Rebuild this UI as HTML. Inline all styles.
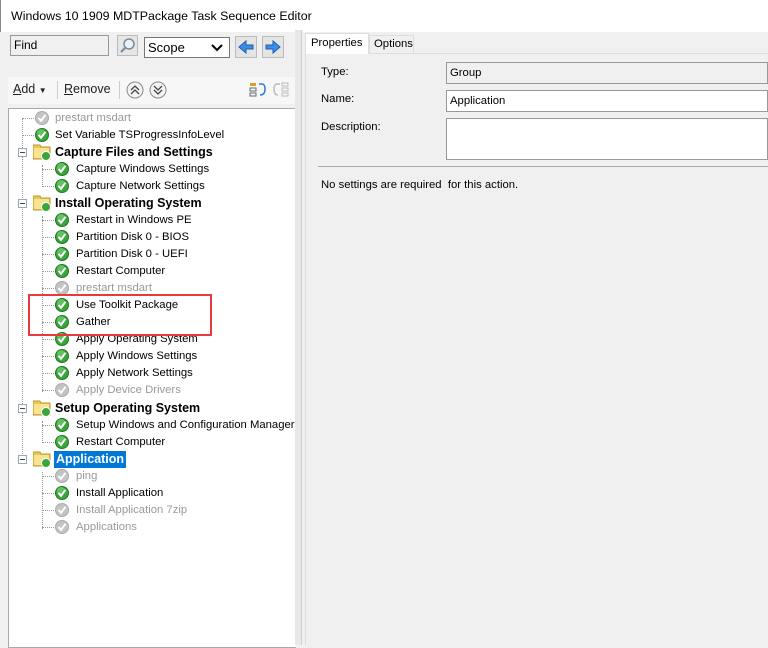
<!DOCTYPE html>
<html><head><meta charset="utf-8"><style>
*{margin:0;padding:0;box-sizing:border-box}
body{width:768px;height:645px;overflow:hidden;background:#f0f0f0;font-family:"Liberation Sans",Arial,sans-serif;font-size:11.3px;color:#000;position:relative}
.abs{position:absolute}
.title{left:0;top:0;width:768px;height:32px;background:#fff;font-size:12.4px;padding:9px 0 0 10px;border-left:1px solid #888}
.row{position:absolute;height:17px;line-height:17px;white-space:nowrap;font-size:11.3px}
.dis{color:#999}
.b{font-weight:bold;font-size:12.5px}
.vl{position:absolute;border-left:1px dotted #999;width:0}
.hl{position:absolute;border-top:1px dotted #999;height:0}
.exp{position:absolute;width:9px;height:9px;border:1px solid #9aa;background:#fff}
.exp:after{content:"";position:absolute;left:1px;top:3px;width:5px;height:1px;background:#446}
</style></head><body>
<div class="abs title">Windows 10 1909 MDTPackage Task Sequence Editor</div>

<div class="abs" style="left:10px;top:35px;width:99px;height:21px;border:1px solid #999;background:#f0f0f0;padding:2px 3px;font-size:12px">Find</div>
<div class="abs" style="left:117px;top:35px;width:21px;height:21px;border:1px solid #bbb;background:#e6e6e6"><svg width="19" height="19"><circle cx="11" cy="8" r="5" fill="#e8f0f8" stroke="#7a8a9a" stroke-width="1.5"/><line x1="7" y1="12" x2="3" y2="16" stroke="#7a8a9a" stroke-width="2"/></svg></div>
<div class="abs" style="left:144px;top:37px;width:86px;height:21px;border:1px solid #777;background:#fff;padding:2px 3px;font-size:13px">Scope<svg class="abs" style="left:66px;top:6px" width="12" height="8"><path d="M1 1L6 6L11 1" stroke="#000" stroke-width="2" fill="none"/></svg></div>
<div class="abs" style="left:235px;top:36px;width:22px;height:22px;border:1px solid #bbb;background:#e4e4e4"><svg width="20" height="20"><path d="M3 10L10 4V8H17V12H10V16Z" fill="#3a8ee6" stroke="#1d5fb0"/></svg></div>
<div class="abs" style="left:262px;top:36px;width:22px;height:22px;border:1px solid #bbb;background:#e4e4e4"><svg width="20" height="20"><path d="M17 10L10 4V8H3V12H10V16Z" fill="#3a8ee6" stroke="#1d5fb0"/></svg></div>

<div class="abs" style="left:8px;top:77px;width:288px;height:27px;background:#f7f7f7"></div>
<div class="abs" style="left:13px;top:82px;font-size:12.5px;color:#222"><u>A</u>dd <span style="font-size:8px">▼</span></div>
<div class="abs" style="left:57px;top:81px;width:1px;height:18px;background:#ccc"></div>
<div class="abs" style="left:64px;top:82px;font-size:12.5px;color:#222"><u>R</u>emove</div>
<div class="abs" style="left:119px;top:81px;width:1px;height:18px;background:#ccc"></div>
<svg class="abs" style="left:126px;top:80px" width="44" height="20"><circle cx="9" cy="10" r="8" fill="#f4f4f4" stroke="#888"/><path d="M5 10L9 6L13 10M5 14L9 10L13 14" stroke="#444" fill="none" stroke-width="1.3"/><circle cx="32" cy="10" r="8" fill="#f4f4f4" stroke="#888"/><path d="M28 6L32 10L36 6M28 10L32 14L36 10" stroke="#444" fill="none" stroke-width="1.3"/></svg>
<svg class="abs" style="left:249px;top:80px" width="44" height="20"><rect x="1" y="3" width="6" height="3" fill="#e0a020"/><rect x="1" y="8" width="6" height="3" fill="none" stroke="#667"/><rect x="1" y="13" width="6" height="3" fill="none" stroke="#667"/><path d="M10 4H13Q16 4 16 9Q16 15 11 15" stroke="#2a7de0" fill="none" stroke-width="1.5"/><path d="M31 4H28Q25 4 25 9Q25 15 29 15" stroke="#bbb" fill="none" stroke-width="1.5"/><rect x="33" y="3" width="6" height="3" fill="none" stroke="#bbb"/><rect x="33" y="8" width="6" height="3" fill="none" stroke="#bbb"/><rect x="33" y="13" width="6" height="3" fill="none" stroke="#bbb"/></svg>

<div class="abs" style="left:8px;top:108px;width:288px;height:540px;background:#fff;border:1px solid #aaa;border-right:none"></div>
<div class="abs" style="left:295px;top:30px;width:6px;height:615px;background:#e8e8e8"></div>
<div class="abs" style="left:301px;top:30px;width:1px;height:615px;background:#d0d0d0"></div>

<svg width="0" height="0" style="position:absolute"><defs>
<g id="ok"><circle cx="7" cy="7" r="6.5" fill="#3aa53a" stroke="#1d7a1d"/><circle cx="6" cy="5" r="4" fill="#7fd07f" opacity=".6"/><path d="M3.5 7L6 9.8L10.5 3.8" stroke="#fff" stroke-width="2" fill="none"/></g>
<g id="dis"><circle cx="7" cy="7" r="6.5" fill="#c4c4c4" stroke="#aaa"/><path d="M3.5 7L6 9.8L10.5 3.8" stroke="#fff" stroke-width="2" fill="none"/></g>
<g id="fold"><path d="M0 2H7L8 4H17V16H0Z" fill="#e8c850" stroke="#b89830"/><rect x="1" y="5" width="15" height="10" fill="#f8e490"/><circle cx="13" cy="13" r="4.5" fill="#3aa53a" stroke="#fff"/></g>
</defs></svg>

<div class="vl" style="left:22px;top:118px;height:342px"></div>
<div class="vl" style="left:42px;top:165px;height:22px"></div>
<div class="vl" style="left:42px;top:216px;height:176px"></div>
<div class="vl" style="left:42px;top:421px;height:22px"></div>
<div class="vl" style="left:42px;top:472px;height:57px"></div>

<div class="hl" style="left:22px;top:118px;width:14px"></div><svg class="abs" style="left:35px;top:111px" width="14" height="14"><use href="#dis"/></svg><div class="row dis" style="left:55px;top:110px">prestart msdart</div>
<div class="hl" style="left:22px;top:135px;width:14px"></div><svg class="abs" style="left:35px;top:128px" width="14" height="14"><use href="#ok"/></svg><div class="row" style="left:55px;top:127px">Set Variable TSProgressInfoLevel</div>
<div class="exp" style="left:18px;top:148px"></div><svg class="abs" style="left:33px;top:143px" width="19" height="19"><use href="#fold"/></svg><div class="row b" style="left:55px;top:144px">Capture Files and Settings</div>
<div class="hl" style="left:42px;top:169px;width:14px"></div><svg class="abs" style="left:55px;top:162px" width="14" height="14"><use href="#ok"/></svg><div class="row" style="left:76px;top:161px">Capture Windows Settings</div>
<div class="hl" style="left:42px;top:186px;width:14px"></div><svg class="abs" style="left:55px;top:179px" width="14" height="14"><use href="#ok"/></svg><div class="row" style="left:76px;top:178px">Capture Network Settings</div>
<div class="exp" style="left:18px;top:199px"></div><svg class="abs" style="left:33px;top:194px" width="19" height="19"><use href="#fold"/></svg><div class="row b" style="left:55px;top:195px">Install Operating System</div>
<div class="hl" style="left:42px;top:220px;width:14px"></div><svg class="abs" style="left:55px;top:213px" width="14" height="14"><use href="#ok"/></svg><div class="row" style="left:76px;top:212px">Restart in Windows PE</div>
<div class="hl" style="left:42px;top:237px;width:14px"></div><svg class="abs" style="left:55px;top:230px" width="14" height="14"><use href="#ok"/></svg><div class="row" style="left:76px;top:229px">Partition Disk 0 - BIOS</div>
<div class="hl" style="left:42px;top:254px;width:14px"></div><svg class="abs" style="left:55px;top:247px" width="14" height="14"><use href="#ok"/></svg><div class="row" style="left:76px;top:246px">Partition Disk 0 - UEFI</div>
<div class="hl" style="left:42px;top:271px;width:14px"></div><svg class="abs" style="left:55px;top:264px" width="14" height="14"><use href="#ok"/></svg><div class="row" style="left:76px;top:263px">Restart Computer</div>
<div class="hl" style="left:42px;top:288px;width:14px"></div><svg class="abs" style="left:55px;top:281px" width="14" height="14"><use href="#dis"/></svg><div class="row dis" style="left:76px;top:280px">prestart msdart</div>
<div class="hl" style="left:42px;top:305px;width:14px"></div><svg class="abs" style="left:55px;top:298px" width="14" height="14"><use href="#ok"/></svg><div class="row" style="left:76px;top:297px">Use Toolkit Package</div>
<div class="hl" style="left:42px;top:322px;width:14px"></div><svg class="abs" style="left:55px;top:315px" width="14" height="14"><use href="#ok"/></svg><div class="row" style="left:76px;top:314px">Gather</div>
<div class="hl" style="left:42px;top:339px;width:14px"></div><svg class="abs" style="left:55px;top:332px" width="14" height="14"><use href="#ok"/></svg><div class="row" style="left:76px;top:331px">Apply Operating System</div>
<div class="hl" style="left:42px;top:356px;width:14px"></div><svg class="abs" style="left:55px;top:349px" width="14" height="14"><use href="#ok"/></svg><div class="row" style="left:76px;top:348px">Apply Windows Settings</div>
<div class="hl" style="left:42px;top:373px;width:14px"></div><svg class="abs" style="left:55px;top:366px" width="14" height="14"><use href="#ok"/></svg><div class="row" style="left:76px;top:365px">Apply Network Settings</div>
<div class="hl" style="left:42px;top:390px;width:14px"></div><svg class="abs" style="left:55px;top:383px" width="14" height="14"><use href="#dis"/></svg><div class="row dis" style="left:76px;top:382px">Apply Device Drivers</div>
<div class="exp" style="left:18px;top:404px"></div><svg class="abs" style="left:33px;top:399px" width="19" height="19"><use href="#fold"/></svg><div class="row b" style="left:55px;top:400px">Setup Operating System</div>
<div class="hl" style="left:42px;top:425px;width:14px"></div><svg class="abs" style="left:55px;top:418px" width="14" height="14"><use href="#ok"/></svg><div class="row" style="left:76px;top:417px;width:219px;overflow:hidden">Setup Windows and Configuration Manager</div>
<div class="hl" style="left:42px;top:442px;width:14px"></div><svg class="abs" style="left:55px;top:435px" width="14" height="14"><use href="#ok"/></svg><div class="row" style="left:76px;top:434px">Restart Computer</div>
<div class="exp" style="left:18px;top:455px"></div><svg class="abs" style="left:33px;top:450px" width="19" height="19"><use href="#fold"/></svg><div class="row b" style="left:54px;top:451px;background:#0078d7;color:#fff;padding:0 2px">Application</div>
<div class="hl" style="left:42px;top:476px;width:14px"></div><svg class="abs" style="left:55px;top:469px" width="14" height="14"><use href="#dis"/></svg><div class="row dis" style="left:76px;top:468px">ping</div>
<div class="hl" style="left:42px;top:493px;width:14px"></div><svg class="abs" style="left:55px;top:486px" width="14" height="14"><use href="#ok"/></svg><div class="row" style="left:76px;top:485px">Install Application</div>
<div class="hl" style="left:42px;top:510px;width:14px"></div><svg class="abs" style="left:55px;top:503px" width="14" height="14"><use href="#dis"/></svg><div class="row dis" style="left:76px;top:502px">Install Application 7zip</div>
<div class="hl" style="left:42px;top:527px;width:14px"></div><svg class="abs" style="left:55px;top:520px" width="14" height="14"><use href="#dis"/></svg><div class="row dis" style="left:76px;top:519px">Applications</div>

<div class="abs" style="left:28px;top:294px;width:184px;height:42px;border:2px solid #e8393f"></div>

<div class="abs" style="left:305px;top:53px;width:463px;height:592px;background:#f0f0f0;border-left:1px solid #ddd;border-top:1px solid #ddd"></div>
<div class="abs" style="left:305px;top:33px;width:64px;height:21px;background:#fff;border:1px solid #ddd;border-bottom:none;padding:3px 0 0 5px">Properties</div>
<div class="abs" style="left:369px;top:35px;width:45px;height:18px;background:#f0f0f0;border:1px solid #ddd;border-bottom:none;padding:2px 0 0 4px">Options</div>
<div class="abs" style="left:321px;top:66px">Type:</div>
<div class="abs" style="left:321px;top:93px">Name:</div>
<div class="abs" style="left:321px;top:121px">Description:</div>
<div class="abs" style="left:446px;top:62px;width:322px;height:22px;border:1px solid #999;background:#f0f0f0;padding:4px 3px">Group</div>
<div class="abs" style="left:446px;top:90px;width:322px;height:22px;border:1px solid #999;background:#fff;padding:4px 3px">Application</div>
<div class="abs" style="left:446px;top:118px;width:322px;height:42px;border:1px solid #999;background:#fff"></div>
<div class="abs" style="left:318px;top:166px;width:450px;height:1px;background:#aaa"></div>
<div class="abs" style="left:321px;top:179px">No settings are required&nbsp; for this action.</div>
</body></html>
